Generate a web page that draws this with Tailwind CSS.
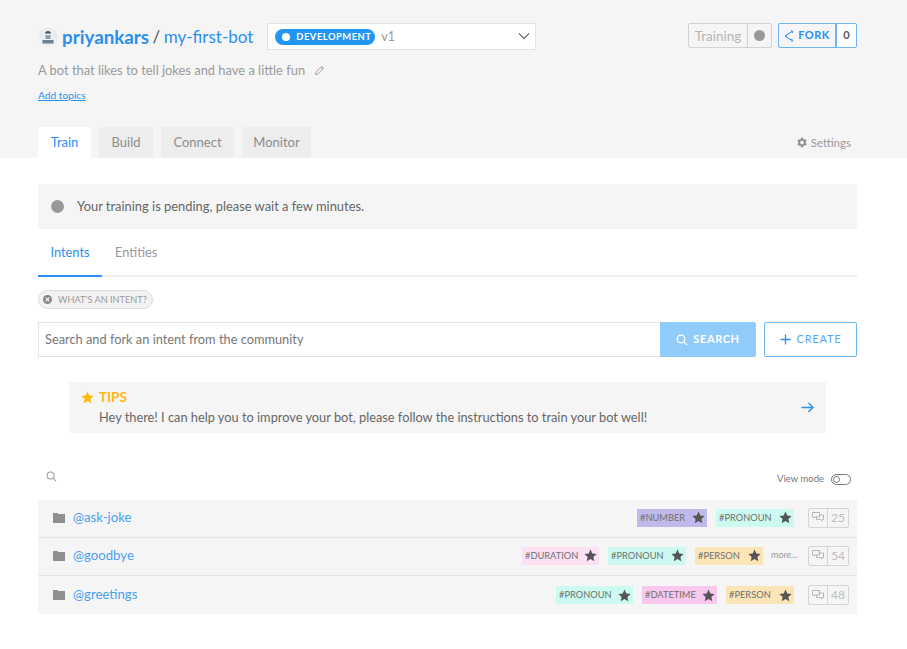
<!DOCTYPE html>
<html lang="en">
<head>
<meta charset="UTF-8">
<title>my-first-bot</title>
<script src="https://cdn.jsdelivr.net/npm/@tailwindcss/browser@4"></script>
</head>
<body class="bg-white font-['Lato',sans-serif] text-[#6b6b6b] w-[907px] h-[649px] overflow-hidden">

<!-- Header -->
<header class="bg-[#f5f5f5] h-[158px] pl-[38px] pr-[50px] flex flex-col">
  <div class="flex items-start pt-[23px] h-[57px]">
    <div class="flex items-center h-[28px]">
      <svg class="w-[20px] h-[20px] mr-[4px]" viewBox="0 0 20 20">
        <circle cx="10" cy="10" r="10" fill="#e8eff2"/>
        <path d="M7 6.500 C7 3 13 3 13 6.500Z" fill="#4a4f55"/>
        <rect x="7.500" y="8" width="5" height="4" fill="#8fa0aa"/>
        <rect x="4.500" y="13" width="11" height="3.500" fill="#6f808c"/>
      </svg>
      <a class="text-[18.8px] font-bold text-[#2b8fef]">priyankars</a>
      <span class="text-[17px] mx-[3.5px] text-[#555]">/</span>
      <a class="text-[17px] text-[#2b8fef]">my-first-bot</a>
    </div>
    <div class="ml-[14px] w-[269px] h-[27px] bg-white border border-[#e4e4e4] flex items-center pl-[7px] pr-[5px] pt-[1px]">
      <span class="h-[16px] w-[100px] rounded-full bg-[#2196f3] flex items-center pl-[7px] text-white text-[9.400px] font-bold tracking-[0.5px]">
        <span class="w-[8px] h-[8px] rounded-full bg-white mr-[6px]"></span>DEVELOPMENT
      </span>
      <span class="ml-[6px] text-[12.5px] text-[#999]">v1</span>
      <svg class="ml-auto mb-[2px] w-[12px] h-[8px]" viewBox="0 0 12 8" fill="none" stroke="#777" stroke-width="1.300"><path d="M1 1.500 L6 6.500 L11 1.500"/></svg>
    </div>
    <div class="ml-auto flex items-center">
      <div class="flex h-[25px] border border-[#d2d2d2] rounded-[2px] mr-[6px]">
        <span class="w-[58px] text-center text-[13.5px] leading-[24px] text-[#b5b5b5]">Training</span>
        <span class="w-[24px] border-l border-[#d2d2d2] flex items-center justify-center"><span class="w-[11px] h-[11px] rounded-full bg-[#999]"></span></span>
      </div>
      <div class="flex h-[25px] border border-[#6db6f6] rounded-[2px]">
        <span class="w-[58px] border-r-2 border-[#6db6f6] flex items-center justify-center text-[11px] font-bold tracking-[0.5px] text-[#2b8fef]">
          <svg class="w-[12px] h-[12px] mr-[2px]" viewBox="0 0 12 12" fill="none" stroke="#2b8fef" stroke-width="1"><path d="M1 6 L8 1.500 M1 6 L8 10.500 M1 6 H3"/><path d="M7 0.500 L9 1.500 L8 3 M7 9 L9 10.500 L7.500 12"/></svg>FORK
        </span>
        <span class="w-[19px] bg-white flex items-center justify-center text-[11px] font-bold text-[#555]">0</span>
      </div>
    </div>
  </div>
  <p class="mt-[3px] text-[12.900px] text-[#9a9a9a] h-[20px] leading-[20px] flex items-center">A bot that likes to tell jokes and have a little fun
    <svg class="w-[11px] h-[11px] ml-[9px]" viewBox="0 0 12 12" fill="none" stroke="#999" stroke-width="1"><path d="M1.500 10.500 L2.200 7.800 L8.500 1.500 L10.500 3.500 L4.200 9.800Z M7.500 2.500 L9.500 4.500"/></svg>
  </p>
  <a class="mt-[8px] text-[10.200px] leading-[14px] text-[#2b8fef] underline self-start">Add topics</a>
  <div class="mt-auto flex items-end">
    <span class="w-[53px] h-[31px] bg-white rounded-t-[2px] text-center text-[13px] leading-[31px] text-[#2b8fef]">Train</span>
    <span class="ml-[8px] w-[54px] h-[31px] bg-[#ededed] rounded-t-[2px] text-center text-[13px] leading-[31px] text-[#8c8c8c]">Build</span>
    <span class="ml-[8px] w-[73px] h-[31px] bg-[#ededed] rounded-t-[2px] text-center text-[13px] leading-[31px] text-[#8c8c8c]">Connect</span>
    <span class="ml-[8px] w-[69px] h-[31px] bg-[#ededed] rounded-t-[2px] text-center text-[13px] leading-[31px] text-[#8c8c8c]">Monitor</span>
    <span class="ml-auto mr-[6px] h-[31px] flex items-center text-[11.500px] text-[#9a9a9a]">
      <svg class="w-[13px] h-[13px] mr-[3px]" viewBox="0 0 24 24" fill="#8a8a8a"><path d="M19.400 13a7.500 7.500 0 0 0 0-2l2.100-1.600-2-3.500-2.500 1a7.600 7.600 0 0 0-1.700-1L15 3.200h-4l-.4 2.700a7.600 7.600 0 0 0-1.700 1l-2.500-1-2 3.500L6.500 11a7.500 7.500 0 0 0 0 2l-2.100 1.600 2 3.500 2.500-1a7.600 7.600 0 0 0 1.700 1l.4 2.700h4l.4-2.700a7.600 7.600 0 0 0 1.700-1l2.500 1 2-3.500zM13 15.500a3.500 3.500 0 1 1 0-7 3.500 3.500 0 0 1 0 7z"/></svg>Settings
    </span>
  </div>
</header>

<main class="pl-[38px] pr-[50px]">
  <!-- Training notice -->
  <div class="mt-[26px] h-[45px] bg-[#f5f5f5] rounded-[2px] flex items-center pl-[13px] text-[12.900px] text-[#666]">
    <span class="w-[13px] h-[13px] rounded-full bg-[#999] mr-[13px]"></span>Your training is pending, please wait a few minutes.
  </div>

  <!-- Sub tabs -->
  <div class="mt-[2px] h-[46px] border-b-2 border-[#eeeeee] flex text-[12.800px]">
    <span class="w-[64px] h-[46px] border-b-2 border-[#2b8fef] text-center leading-[42px] text-[#2b8fef]">Intents</span>
    <span class="ml-[13px] leading-[42px] text-[#9a9a9a]">Entities</span>
  </div>

  <span class="mt-[13px] w-[115px] h-[19px] rounded-full bg-[#f2f2f2] border border-[#dddddd] flex items-center pl-[4px] text-[9.200px] text-[#9a9a9a]">
    <svg class="w-[9px] h-[9px] mr-[6px]" viewBox="0 0 10 10"><circle cx="5" cy="5" r="5" fill="#888"/><path d="M3 3 L7 7 M7 3 L3 7" stroke="#fff" stroke-width="1.200"/></svg>WHAT'S AN INTENT?
  </span>

  <!-- Community search -->
  <div class="mt-[13px] flex h-[35px]">
    <div class="flex-1 border border-[#e4e4e4] border-r-0 flex items-center pl-[6px] text-[12.800px] text-[#777]">Search and fork an intent from the community</div>
    <button class="w-[96px] bg-[#90cbfa] rounded-r-[2px] flex items-center justify-center text-[11px] font-bold tracking-[0.6px] text-white">
      <svg class="w-[12px] h-[12px] mr-[5px]" viewBox="0 0 12 12" fill="none" stroke="#fff" stroke-width="1.300"><circle cx="5" cy="5" r="3.800"/><path d="M8 8 L11 11"/></svg>SEARCH
    </button>
    <button class="ml-[8px] w-[93px] bg-white border border-[#6db6f6] rounded-[2px] flex items-center justify-center text-[11px] tracking-[0.8px] text-[#5aa9ee]">
      <svg class="w-[11px] h-[11px] mr-[6px]" viewBox="0 0 11 11" stroke="#2b8fef" stroke-width="1.300"><path d="M5.500 0.500 V10.500 M0.500 5.500 H10.500"/></svg>CREATE
    </button>
  </div>

  <!-- Tips -->
  <div class="mt-[25px] mx-[31px] h-[51px] bg-[#f5f5f5] flex items-center px-[12px]">
    <div class="flex-1">
      <div class="flex items-center h-[18px]">
        <svg class="w-[13px] h-[13px] mr-[5px]" viewBox="0 0 24 24" fill="#ffb90f"><path d="M12 1l3.300 7.400 8 .8-6 5.400 1.700 7.900L12 18.500l-7 4 1.700-7.900-6-5.400 8-.8z"/></svg>
        <span class="text-[13.5px] font-bold text-[#ffb90f]">TIPS</span>
      </div>
      <p class="pl-[18px] text-[12.800px] leading-[20px] text-[#666]">Hey there! I can help you to improve your bot, please follow the instructions to train your bot well!</p>
    </div>
    <svg class="w-[13px] h-[11px]" viewBox="0 0 13 11" fill="none" stroke="#2b8fef" stroke-width="1.400"><path d="M0.500 5.500 H12 M7.500 1 L12 5.500 L7.500 10"/></svg>
  </div>

  <!-- Filter row -->
  <div class="mt-[31px] h-[36px] flex items-start">
    <svg class="ml-[8px] mt-[7px] w-[11px] h-[11px]" viewBox="0 0 12 12" fill="none" stroke="#999" stroke-width="1.100"><circle cx="5" cy="5" r="3.800"/><path d="M8 8 L11 11"/></svg>
    <div class="ml-auto mr-[6px] mt-[8px] flex items-center text-[9.500px] text-[#777]">
      View mode
      <span class="ml-[7px] w-[20px] h-[11px] rounded-full border border-[#777] flex items-center pl-[1px]"><span class="w-[7px] h-[7px] rounded-full border border-[#777] bg-white"></span></span>
    </div>
  </div>

  <!-- Intent list -->
  <ul>
    <li class="h-[38px] bg-[#f5f5f5] border-b border-[#e4e4e4] flex items-center pl-[15px] pr-[8px] pb-[2px]">
      <svg class="w-[12px] h-[10px] mr-[8px]" viewBox="0 0 12 10" fill="#8f8f8f"><path d="M0 0 H4.500 L5.500 1 H12 V10 H0Z"/></svg>
      <a class="text-[13.200px] text-[#4a9ff0]">@ask-joke</a>
      <div class="ml-auto flex items-center">
        <span class="h-[18px] w-[70px] bg-[#c0b9ec] flex items-center justify-between pl-[3px] pr-[2px] text-[9.300px] text-[#707070]">#NUMBER<svg class="w-[13px] h-[13px]" viewBox="0 0 24 24" fill="#555"><path d="M12 1l3.300 7.400 8 .8-6 5.400 1.700 7.900L12 18.500l-7 4 1.700-7.900-6-5.400 8-.8z"/></svg></span>
        <span class="ml-[9px] h-[18px] w-[78px] bg-[#ccfaf0] flex items-center justify-between pl-[3px] pr-[2px] text-[9.300px] text-[#707070]">#PRONOUN<svg class="w-[13px] h-[13px]" viewBox="0 0 24 24" fill="#555"><path d="M12 1l3.300 7.400 8 .8-6 5.400 1.700 7.900L12 18.500l-7 4 1.700-7.900-6-5.400 8-.8z"/></svg></span>
        <div class="ml-[14px] w-[41px] h-[20px] border border-[#d5d5d5] rounded-[2px] flex items-center text-[12px] text-[#bdbdbd]">
          <span class="w-[19px] h-full border-r border-[#d5d5d5] flex items-center justify-center">
            <svg class="w-[12px] h-[11px]" viewBox="0 0 12 11" fill="none" stroke="#aaa" stroke-width="0.800"><path d="M.5 .5 H7.500 V5 H3 L1.800 6.200 V5 H.5Z"/><path d="M4.500 5 V7.500 H8.500 L10 9 V7.500 H11.500 V3 H7.500"/></svg>
          </span>
          <span class="flex-1 text-center">25</span>
        </div>
      </div>
    </li>
    <li class="h-[38px] bg-[#f5f5f5] border-b border-[#e4e4e4] flex items-center pl-[15px] pr-[8px] pb-[2px]">
      <svg class="w-[12px] h-[10px] mr-[8px]" viewBox="0 0 12 10" fill="#8f8f8f"><path d="M0 0 H4.500 L5.500 1 H12 V10 H0Z"/></svg>
      <a class="text-[13.200px] text-[#4a9ff0]">@goodbye</a>
      <div class="ml-auto flex items-center">
        <span class="h-[18px] w-[77px] bg-[#fce0f4] flex items-center justify-between pl-[3px] pr-[2px] text-[9.300px] text-[#707070]">#DURATION<svg class="w-[13px] h-[13px]" viewBox="0 0 24 24" fill="#555"><path d="M12 1l3.300 7.400 8 .8-6 5.400 1.700 7.900L12 18.500l-7 4 1.700-7.900-6-5.400 8-.8z"/></svg></span>
        <span class="ml-[9px] h-[18px] w-[78px] bg-[#ccfaf0] flex items-center justify-between pl-[3px] pr-[2px] text-[9.300px] text-[#707070]">#PRONOUN<svg class="w-[13px] h-[13px]" viewBox="0 0 24 24" fill="#555"><path d="M12 1l3.300 7.400 8 .8-6 5.400 1.700 7.900L12 18.500l-7 4 1.700-7.900-6-5.400 8-.8z"/></svg></span>
        <span class="ml-[9px] h-[18px] w-[68px] bg-[#fbe5b6] flex items-center justify-between pl-[3px] pr-[2px] text-[9.300px] text-[#707070]">#PERSON<svg class="w-[13px] h-[13px]" viewBox="0 0 24 24" fill="#555"><path d="M12 1l3.300 7.400 8 .8-6 5.400 1.700 7.900L12 18.500l-7 4 1.700-7.900-6-5.400 8-.8z"/></svg></span>
        <span class="ml-[8px] w-[30px] text-[9.500px] italic text-[#9a9a9a]">more...</span>
        <div class="ml-[7px] w-[41px] h-[20px] border border-[#d5d5d5] rounded-[2px] flex items-center text-[12px] text-[#bdbdbd]">
          <span class="w-[19px] h-full border-r border-[#d5d5d5] flex items-center justify-center">
            <svg class="w-[12px] h-[11px]" viewBox="0 0 12 11" fill="none" stroke="#aaa" stroke-width="0.800"><path d="M.5 .5 H7.500 V5 H3 L1.800 6.200 V5 H.5Z"/><path d="M4.500 5 V7.500 H8.500 L10 9 V7.500 H11.500 V3 H7.500"/></svg>
          </span>
          <span class="flex-1 text-center">54</span>
        </div>
      </div>
    </li>
    <li class="h-[38px] bg-[#f5f5f5] flex items-center pl-[15px] pr-[8px]">
      <svg class="w-[12px] h-[10px] mr-[8px]" viewBox="0 0 12 10" fill="#8f8f8f"><path d="M0 0 H4.500 L5.500 1 H12 V10 H0Z"/></svg>
      <a class="text-[13.200px] text-[#4a9ff0]">@greetings</a>
      <div class="ml-auto flex items-center">
        <span class="h-[18px] w-[77px] bg-[#ccfaf0] flex items-center justify-between pl-[3px] pr-[2px] text-[9.300px] text-[#707070]">#PRONOUN<svg class="w-[13px] h-[13px]" viewBox="0 0 24 24" fill="#555"><path d="M12 1l3.300 7.400 8 .8-6 5.400 1.700 7.900L12 18.500l-7 4 1.700-7.900-6-5.400 8-.8z"/></svg></span>
        <span class="ml-[9px] h-[18px] w-[75px] bg-[#f8c8ef] flex items-center justify-between pl-[3px] pr-[2px] text-[9.300px] text-[#707070]">#DATETIME<svg class="w-[13px] h-[13px]" viewBox="0 0 24 24" fill="#555"><path d="M12 1l3.300 7.400 8 .8-6 5.400 1.700 7.900L12 18.500l-7 4 1.700-7.900-6-5.400 8-.8z"/></svg></span>
        <span class="ml-[9px] h-[18px] w-[68px] bg-[#fbe5b6] flex items-center justify-between pl-[3px] pr-[2px] text-[9.300px] text-[#707070]">#PERSON<svg class="w-[13px] h-[13px]" viewBox="0 0 24 24" fill="#555"><path d="M12 1l3.300 7.400 8 .8-6 5.400 1.700 7.900L12 18.500l-7 4 1.700-7.900-6-5.400 8-.8z"/></svg></span>
        <div class="ml-[14px] w-[41px] h-[20px] border border-[#d5d5d5] rounded-[2px] flex items-center text-[12px] text-[#bdbdbd]">
          <span class="w-[19px] h-full border-r border-[#d5d5d5] flex items-center justify-center">
            <svg class="w-[12px] h-[11px]" viewBox="0 0 12 11" fill="none" stroke="#aaa" stroke-width="0.800"><path d="M.5 .5 H7.500 V5 H3 L1.800 6.200 V5 H.5Z"/><path d="M4.500 5 V7.500 H8.500 L10 9 V7.500 H11.500 V3 H7.500"/></svg>
          </span>
          <span class="flex-1 text-center">48</span>
        </div>
      </div>
    </li>
  </ul>
</main>
</body>
</html>
